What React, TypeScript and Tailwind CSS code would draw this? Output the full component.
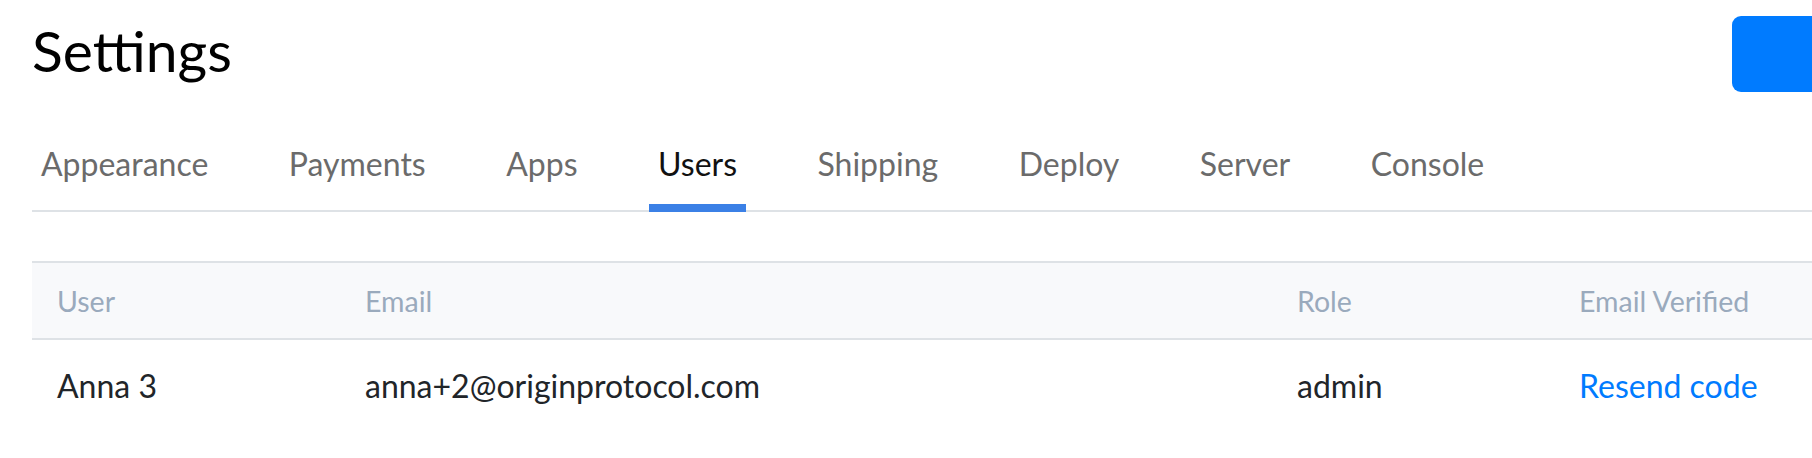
import React from 'react';

const tabs = ['Appearance', 'Payments', 'Apps', 'Users', 'Shipping', 'Deploy', 'Server', 'Console'];

const users = [{ name: 'Anna 3', email: 'anna+2@originprotocol.com', role: 'admin', verified: false }];

export default function App() {
  return (
    <div className="w-[1812px] h-[458px] overflow-hidden bg-white" style={{ fontFamily: 'Lato, "Noto Sans", sans-serif' }}>
      <div className="w-[1900px] pl-[32px]">
        {/* Header */}
        <div className="flex items-start justify-between pt-4">
          <h1 className="text-[57px] leading-[1.2] font-normal text-black">Settings</h1>
          <button className="h-[76px] w-[168px] rounded-[9px] bg-[#007bff]" />
        </div>

        {/* Tabs */}
        <nav className="mt-[53px] flex gap-[62.5px] border-b-2 border-[#dee2e6]">
          {tabs.map((t) => (
            <a
              key={t}
              className={`-mb-[2px] border-b-[8px] px-[9px] pb-[21px] text-[32px] leading-[1.2] ${
                t === 'Users' ? 'border-[#3b80e6] text-[#111]' : 'border-transparent text-[#6b6b6b]'
              }`}
            >
              {t}
            </a>
          ))}
        </nav>

        {/* Users table */}
        <div className="mt-[49px] leading-[1.2]">
          <div className="grid grid-cols-[308px_932px_282px_1fr] border-y-2 border-[#dee2e6] bg-[#f8f9fb] text-[28.5px] text-[#9aaabd]">
            <div className="pt-[21px] pb-[19px] pl-[25px]">User</div>
            <div className="pt-[21px] pb-[19px] pl-[25px]">Email</div>
            <div className="pt-[21px] pb-[19px] pl-[25px]">Role</div>
            <div className="pt-[21px] pb-[19px] pl-[25px]">Email Verified</div>
          </div>
          {users.map((u) => (
            <div key={u.email} className="grid grid-cols-[308px_932px_282px_1fr] text-[32px] text-[#212529]">
              <div className="py-[27px] pl-[25px]">{u.name}</div>
              <div className="py-[27px] pl-[25px]">{u.email}</div>
              <div className="py-[27px] pl-[25px]">{u.role}</div>
              <div className="py-[27px] pl-[25px]">
                {u.verified ? 'Yes' : <a className="text-[#007bff]">Resend code</a>}
              </div>
            </div>
          ))}
        </div>
      </div>
    </div>
  );
}
